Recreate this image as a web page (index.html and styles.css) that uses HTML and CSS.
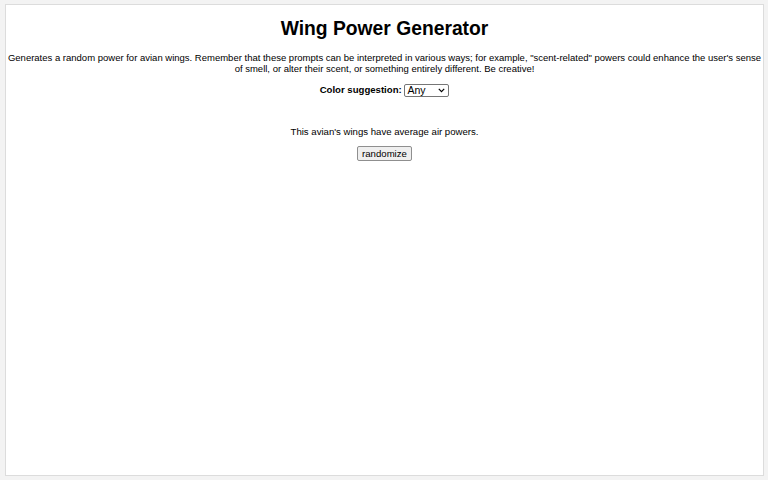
FILE: index.html
```html
<!DOCTYPE html>
<html lang="en">

<head>
    <meta charset="UTF-8">
    <title>Wing Power Generator</title>

    <link rel="stylesheet" href="styles.css">
</head>

<body>
    <div id="main">
        <h1>Wing Power Generator</h1>

        <p class="intro">Generates a random power for avian wings. Remember that these prompts can be interpreted in
            various ways; for example, "scent-related" powers could enhance the user's sense of smell, or alter their
            scent, or something entirely different. Be creative!</p>

        <div class="options">
            <label for="colorSelect">Color suggestion:</label>
            <span class="select-wrap">
                <select id="colorSelect">
                    <option>Any</option>
                    <option>Red</option>
                    <option>Blue</option>
                    <option>Green</option>
                </select>
                <!-- dropdown arrow -->
                <svg class="chevron" width="7" height="5" viewBox="0 0 7 5">
                    <path d="M0.8 0.9 L3.5 3.6 L6.2 0.9" fill="none" stroke="#000" stroke-width="1.2" />
                </svg>
            </span>
        </div>

        <p id="result">This avian's wings have average air powers.</p>

        <button>randomize</button>
    </div>
</body>

</html>
```
FILE: styles.css
```css
html,
body {
    height: 100%;
}

body {
    background-color: #f3f3f3;
    font-family: 'Liberation Sans', Arial, sans-serif;
    font-size: 9.6px;
    color: #000;
    margin: 0;
    padding: 4px 4px 4px 5px;
    box-sizing: border-box;
}

#main {
    background-color: #fff;
    border: 1px solid #dcdcdc;
    height: 100%;
    box-sizing: border-box;
    text-align: center;
}

h1 {
    font-size: 19.3px;
    margin: 13px 0 12px;
}

.intro {
    font-size: 9.5px;
    margin: 0 0 10px;
    line-height: 11px;
}

.options {
    font-weight: bold;
}

.select-wrap {
    position: relative;
    display: inline-block;
    vertical-align: middle;
}

.select-wrap select {
    appearance: none;
    -webkit-appearance: none;
    display: block;
    font-family: 'Liberation Sans', Arial, sans-serif;
    font-size: 10.5px;
    line-height: 11px;
    font-weight: normal;
    color: #000;
    background-color: #fff;
    width: 45px;
    height: 13px;
    padding: 0 0 0 2px;
    border: 1px solid #767676;
    border-radius: 2px;
}

.chevron {
    position: absolute;
    right: 4px;
    top: 4px;
    pointer-events: none;
}

#result {
    margin: 29px 0 9px;
}

button {
    font-family: 'Liberation Sans', Arial, sans-serif;
    font-size: 9.6px;
    color: #000;
    background-color: #efefef;
    border: 1px solid #8f8f8f;
    border-radius: 2px;
    padding: 0 4px;
    height: 15px;
}
```
